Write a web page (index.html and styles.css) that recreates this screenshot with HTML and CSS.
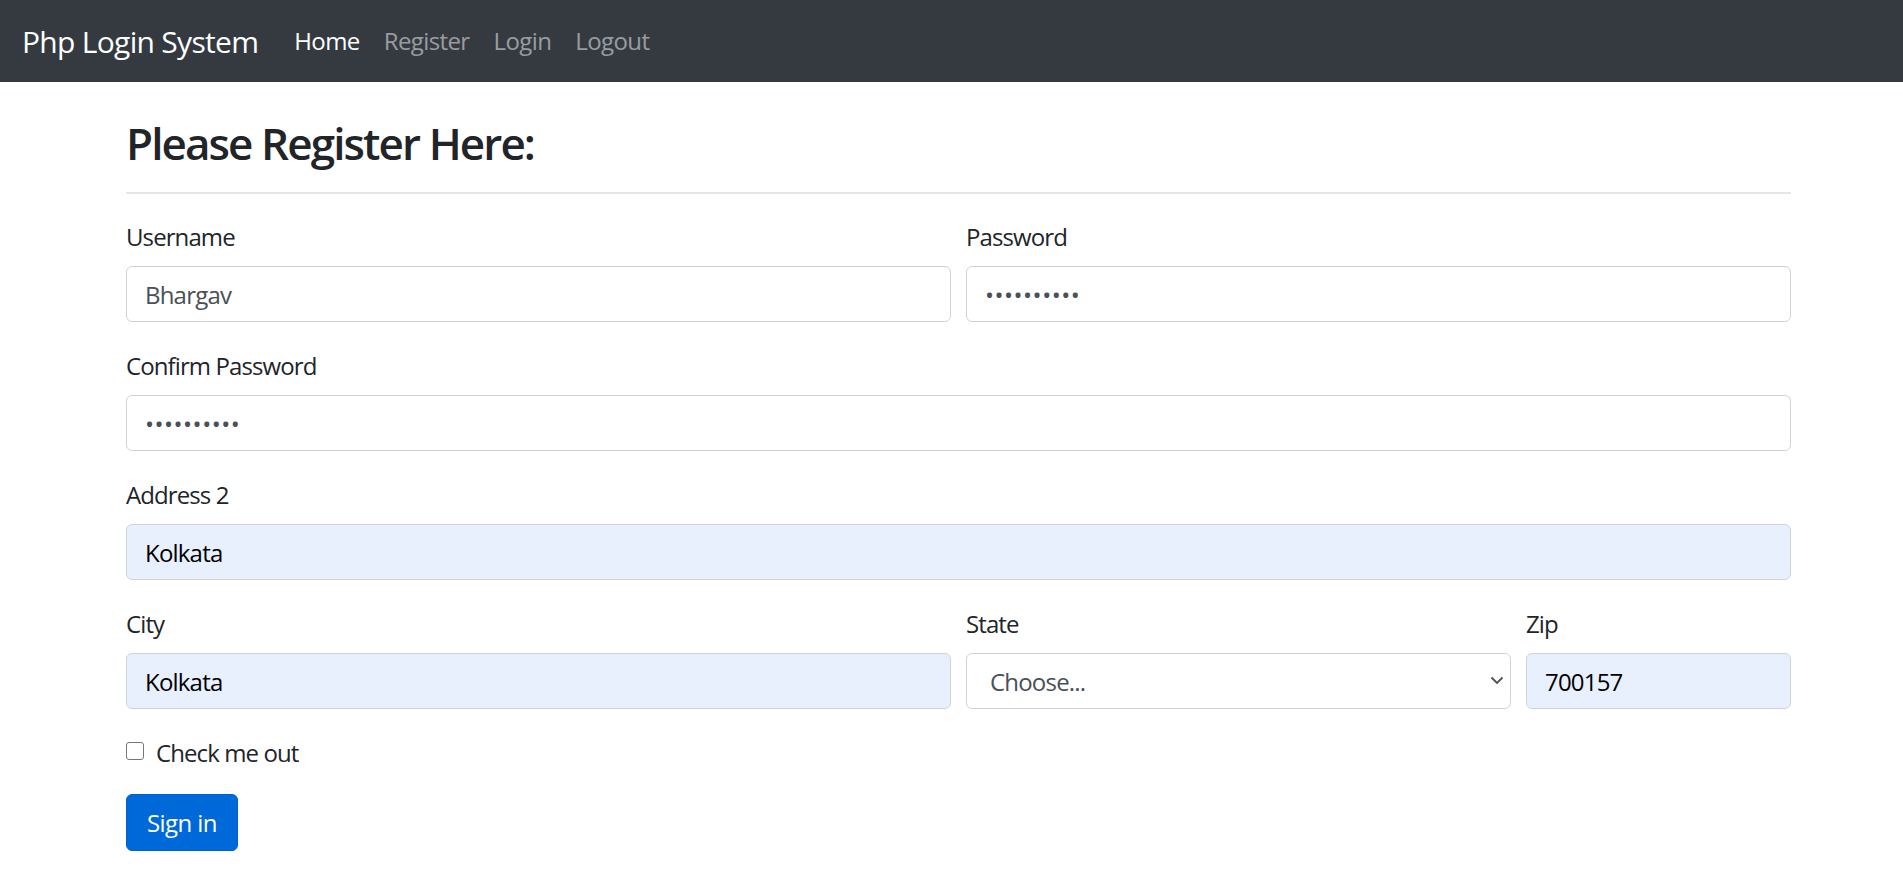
FILE: index.html
```html
<!DOCTYPE html>
<html lang="en">
<head>
<meta charset="utf-8">
<title>Php Login System</title>
<link rel="stylesheet" href="styles.css">
</head>
<body>
<nav class="navbar">
  <a class="brand" href="#">Php Login System</a>
  <ul class="nav">
    <li><a class="nav-link active" href="#">Home</a></li>
    <li><a class="nav-link" href="#">Register</a></li>
    <li><a class="nav-link" href="#">Login</a></li>
    <li><a class="nav-link" href="#">Logout</a></li>
  </ul>
</nav>
<main class="container">
  <h2 class="title">Please Register Here:</h2>
  <hr class="divider">
  <form class="form">
    <div class="form-row">
      <div class="form-group col-6">
        <label for="username">Username</label>
        <input class="form-control" id="username" type="text" value="Bhargav">
      </div>
      <div class="form-group col-6">
        <label for="password">Password</label>
        <input class="form-control" id="password" type="password" value="abcdefghij">
      </div>
    </div>
    <div class="form-group">
      <label for="cpassword">Confirm Password</label>
      <input class="form-control" id="cpassword" type="password" value="abcdefghij">
    </div>
    <div class="form-group">
      <label for="address2">Address 2</label>
      <input class="form-control autofilled" id="address2" type="text" value="Kolkata">
    </div>
    <div class="form-row">
      <div class="form-group col-6">
        <label for="city">City</label>
        <input class="form-control autofilled" id="city" type="text" value="Kolkata">
      </div>
      <div class="form-group col-4">
        <label for="state">State</label>
        <div class="select-wrap">
          <select class="form-control form-select" id="state">
            <option selected>Choose...</option>
            <option>...</option>
          </select>
          <svg class="select-caret" width="14" height="9" viewBox="0 0 14 9" aria-hidden="true"><path d="M1.5 1.5 L7 7 L12.5 1.5" fill="none" stroke="#505050" stroke-width="1.8"/></svg>
        </div>
      </div>
      <div class="form-group col-2">
        <label for="zip">Zip</label>
        <input class="form-control autofilled" id="zip" type="text" value="700157">
      </div>
    </div>
    <div class="form-group form-check">
      <input class="check-input" type="checkbox" id="check">
      <label class="check-label" for="check">Check me out</label>
    </div>
    <button type="button" class="btn btn-primary">Sign in</button>
  </form>
</main>
</body>
</html>
```
FILE: styles.css
```css
* {
  box-sizing: border-box;
}

body {
  margin: 0;
  font-family: "Open Sans", "Noto Sans", sans-serif;
  font-size: 24px;
  line-height: 36px;
  color: #212529;
  background: #fff;
}

/* Navbar */
.navbar {
  height: 82px;
  background: #343a40;
  display: flex;
  align-items: center;
  padding: 0 24px 0 22px;
}

.brand {
  font-size: 30px;
  line-height: 45px;
  color: #fff;
  text-decoration: none;
  margin-right: 24px;
  letter-spacing: -0.7px;
}

.nav {
  display: flex;
  list-style: none;
  margin: 0;
  padding: 0;
}

.nav-link {
  display: block;
  padding: 0 12px;
  line-height: 36px;
  color: rgba(255, 255, 255, 0.5);
  text-decoration: none;
  letter-spacing: -0.6px;
}

.nav-link.active {
  color: #fff;
}

/* Content */
.container {
  width: 1665px;
  margin-left: 126px;
  padding-top: 33px;
}

.title {
  margin: 0;
  font-size: 44px;
  line-height: 56px;
  font-weight: 600;
  letter-spacing: -1.9px;
}

.divider {
  margin: 21px 0 25px;
  border: 0;
  border-top: 2px solid #e6e6e6;
  height: 0;
}

.form-row {
  display: flex;
  margin: 0 -7.5px;
}

.form-row > .form-group {
  padding: 0 7.5px;
}

.col-6 { flex: 0 0 50%; }
.col-4 { flex: 0 0 33.3333%; }
.col-2 { flex: 0 0 16.6667%; }

.form-group {
  margin-bottom: 26px;
}

label {
  display: block;
  margin-bottom: 11px;
  line-height: 36px;
  letter-spacing: -0.9px;
}

.form-control {
  display: block;
  width: 100%;
  height: 56px;
  padding: 0 18px;
  font-family: inherit;
  font-size: 24px;
  color: #495057;
  background: #fff;
  border: 1.5px solid #ced4da;
  border-radius: 6px;
  outline: none;
  letter-spacing: -0.8px;
}

.form-control[type="password"] {
  letter-spacing: 0.5px;
}

.autofilled {
  background: #e8f0fe;
  color: #000;
}

.select-wrap {
  position: relative;
}

.form-select {
  appearance: none;
  -webkit-appearance: none;
  padding-left: 23px;
}

.select-caret {
  position: absolute;
  right: 7px;
  top: 23px;
  pointer-events: none;
}

/* Checkbox */
.form-check {
  display: flex;
  align-items: flex-start;
  gap: 12px;
  margin-bottom: 23px;
}

.check-input {
  appearance: none;
  -webkit-appearance: none;
  width: 18px;
  height: 18px;
  margin: 7px 0 0;
  border: 1.5px solid #767676;
  border-radius: 3px;
  background: #fff;
  flex: none;
}

.check-label {
  margin: 0;
}

/* Button */
.btn {
  height: 57px;
  padding: 0 20px;
  font-family: inherit;
  font-size: 24px;
  line-height: 36px;
  border-radius: 6px;
  cursor: pointer;
  letter-spacing: -0.6px;
}

.btn-primary {
  color: #fff;
  background: #0069d9;
  border: 1.5px solid #0062cc;
}
```
